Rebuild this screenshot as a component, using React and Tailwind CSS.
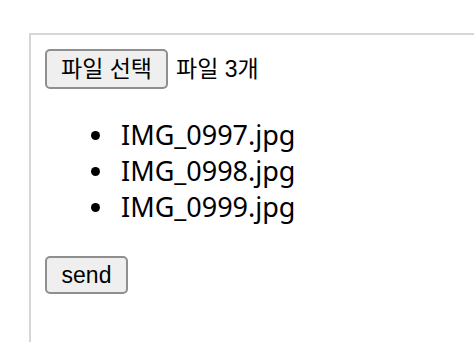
export default function App() {
  const files = ["IMG_0997.jpg", "IMG_0998.jpg", "IMG_0999.jpg"];

  return (
    <div className="min-h-[342px] bg-white pt-[33px] pl-[29px]">
      <div className="h-[309px] border-t-2 border-l-2 border-[#d6d6d6] pl-[14px] pt-[14px]">
        <div className="flex items-center">
          <button className="h-[40px] w-[123px] rounded-[5px] border-2 border-[#8f8f8f] bg-[#efefef] text-[23px] leading-none text-black font-['Liberation_Sans','Noto_Sans_CJK_KR',sans-serif]">
            파일 선택
          </button>
          <span className="ml-[8px] text-[23px] text-black font-['Liberation_Sans','Noto_Sans_CJK_KR',sans-serif]">
            파일 3개
          </span>
        </div>

        <ul className="mt-[28px] pl-[46px] text-[27px] leading-[36px] text-black font-['Noto_Sans',sans-serif]">
          {files.map((f) => (
            <li key={f} className="flex items-center">
              <span className="mr-[21px] h-[9px] w-[9px] shrink-0 rounded-full bg-black" />
              <span>{f}</span>
            </li>
          ))}
        </ul>

        <button className="mt-[31px] h-[38px] w-[83px] rounded-[5px] border-2 border-[#8f8f8f] bg-[#efefef] text-[23px] leading-none text-black font-['Liberation_Sans',sans-serif]">
          send
        </button>
      </div>
    </div>
  );
}
